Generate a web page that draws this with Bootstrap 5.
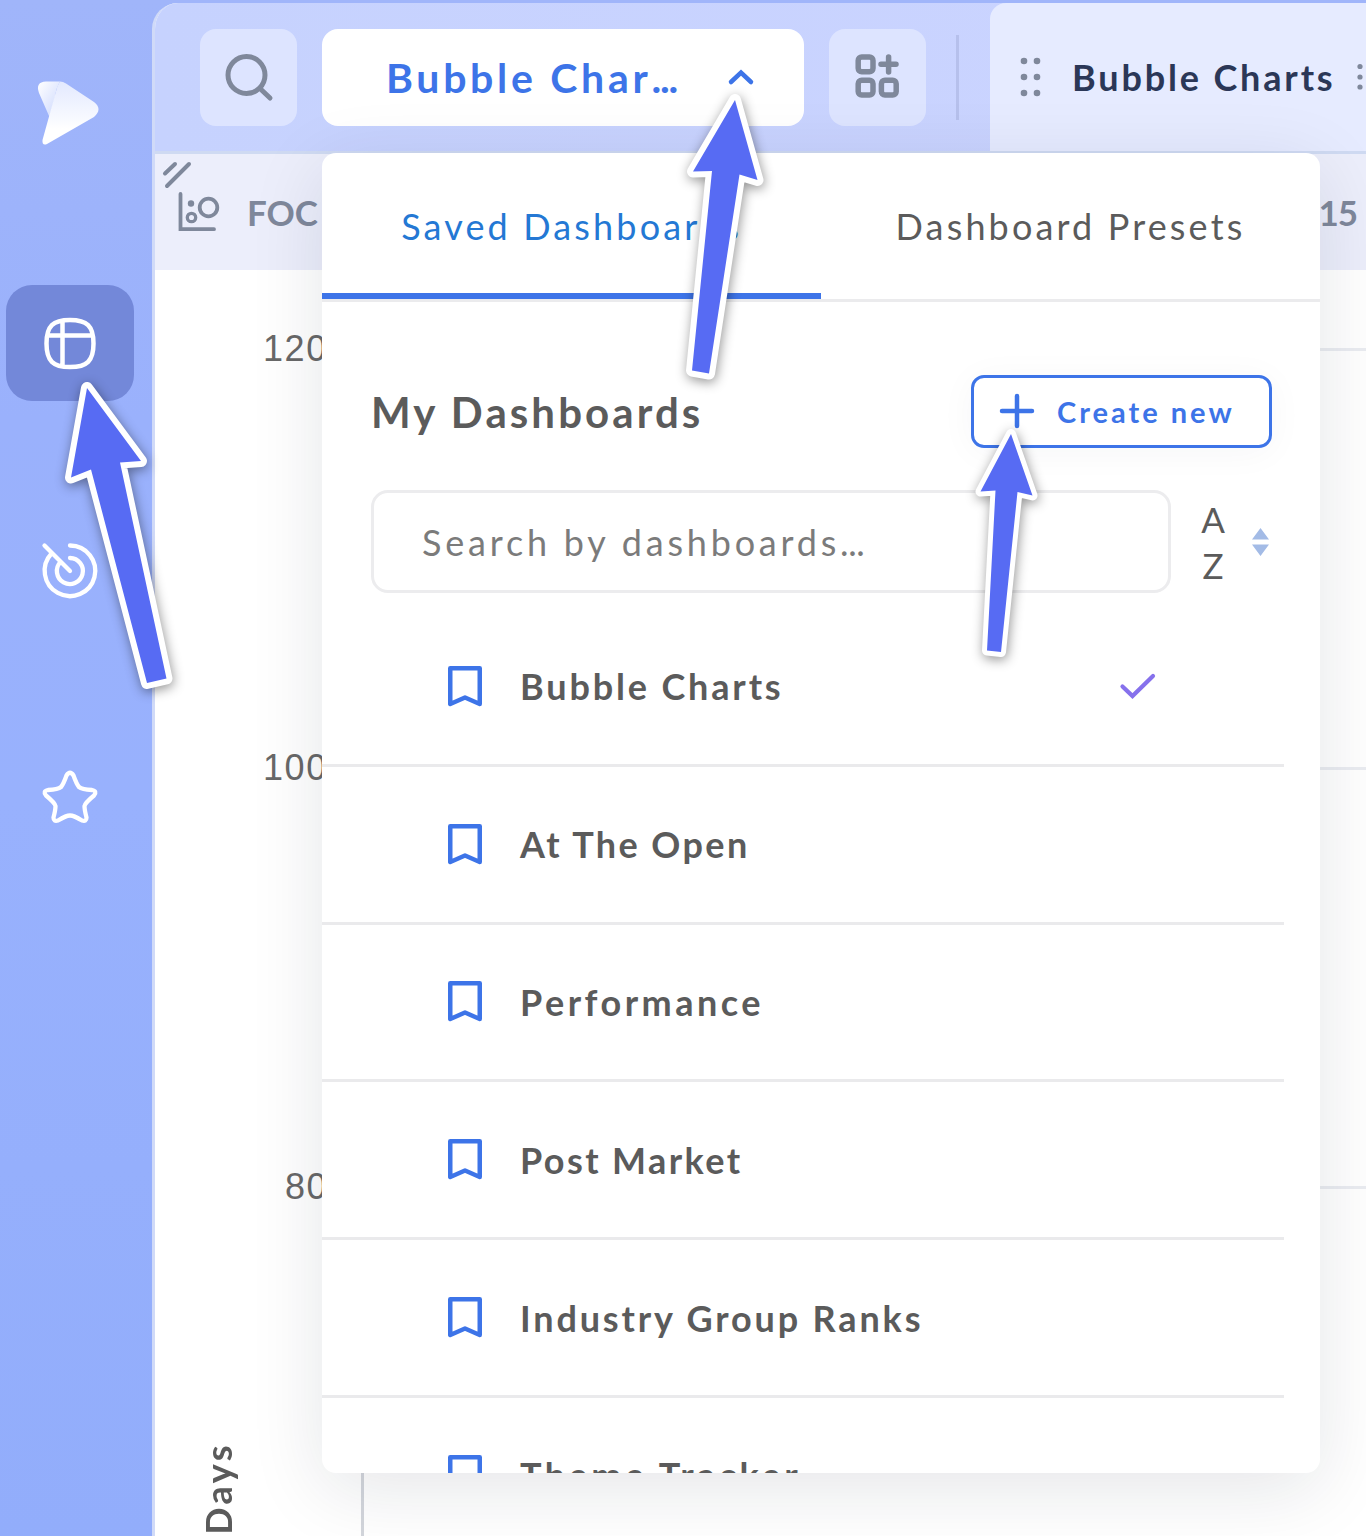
<!DOCTYPE html>
<html lang="en">
<head>
<meta charset="utf-8">
<meta name="viewport" content="width=device-width, initial-scale=1">
<title>Dashboards</title>
<link href="https://cdn.jsdelivr.net/npm/bootstrap@5.3.0/dist/css/bootstrap.min.css" rel="stylesheet">
<style>
body{font-family:Lato,"Noto Sans",sans-serif;font-size:36px;line-height:1;color:#5b5b5b;background:#fff}
svg{display:block;overflow:visible;flex:none}
.t{display:block;white-space:nowrap}
.app{width:1366px;height:1536px;overflow:hidden;background:linear-gradient(180deg,#a0b5fa 0,#9ab1fc 420px,#98b1fd 800px,#92adfb 100%)}
.side{width:152px;flex:none;padding-top:80px}
.side-item{width:128px;height:116px;margin-left:6px;border-radius:26px}
.side-item.current{background:#7388d9;margin-top:139px}
.side-item.next{margin-top:112px}
.main-area{flex:1;min-width:0;margin-top:3px;border-left:3px solid #d0daf8;border-top-left-radius:26px;overflow:hidden;background:#fff}
.toolbar{height:151px;background:linear-gradient(90deg,#c6d2fe,#cbd4ff);border-bottom:3px solid #cfdaf2;padding-left:45px}
.tool{width:97px;height:97px;border-radius:16px;background:#dde4ff;flex:none}
.picker{width:482px;height:97px;border-radius:16px;background:#fff;color:#3d74e8;padding:0 51px 0 64px;margin:0 25px;flex:none}
.rule{width:3px;height:85px;background:#b6c0ec;margin-left:30px;flex:none}
.tabcard{margin-left:31px;height:148px;flex:1;background:#e6ebff;border-top-left-radius:16px;color:#2b3757;padding-left:30px;position:relative}
.widget-bar{height:116px;background:#eceefb;color:#7f889b;padding:0 9px 0 23px}
.plot{position:relative;height:1266px}
.axis{position:absolute;font-family:"Liberation Sans",Arial,sans-serif;font-size:36px;letter-spacing:1.6px;color:#686868}
.gl{position:absolute;left:208px;right:0;height:3px;background:#eaecf1}
.vl{position:absolute;left:206px;top:0;bottom:0;width:3px;background:#d3d6dc}
.days{position:absolute;left:45px;top:1172px;writing-mode:vertical-rl;transform:rotate(180deg);font-weight:700;font-size:36px;letter-spacing:3.4px}
.panel{position:absolute;left:322px;top:153px;width:998px;height:1320px;border-radius:14px;box-shadow:0 16px 76px rgba(20,28,50,.11);background:#fff;overflow:hidden}
.tabs{height:149px;border-bottom:3px solid #ebebed}
.tabs>div{height:146px;position:relative}
.tabs .on{color:#2478d4}
.tabs .on::after{content:"";position:absolute;left:0;right:0;bottom:0;height:6px;background:#3d74e8}
.head{height:73px;margin:73px 48px 0 49px}
.create{width:301px;height:73px;border:3px solid #3d74e8;border-radius:13px;color:#3d74e8;padding:0 0 1px 26px;box-shadow:0 4px 36px rgba(30,40,80,.04)}
.find{height:103px;margin:42px 48px 0 49px}
.field{width:800px;height:103px;border:3px solid #ececee;border-radius:17px;padding-left:48px;color:#7b7b7b}
.az{margin-left:30px;width:24px;line-height:46px;font-size:35px}
.rows{margin:16px 36px 0 0}
.item{height:157.8px;border-bottom:3px solid #eaeaec;padding:0 128px 0 126px}
.item .t{margin-left:38px;font-weight:700}
.arrows{position:absolute;left:0;top:0;pointer-events:none;filter:drop-shadow(1px 3px 6px rgba(0,0,0,.42))}
.k1{font-size:41px;font-weight:700;letter-spacing:3.7px}
.k1 span{letter-spacing:-1.2px}
.k2{letter-spacing:2.4px}
.k25{letter-spacing:2.85px}
.k3{font-size:42px;font-weight:700;letter-spacing:3.1px}
.k31{letter-spacing:3.15px}
.k35{letter-spacing:3.5px}
.k4{font-size:29px;font-weight:700;letter-spacing:3px}
.ks{letter-spacing:3.8px}
.ks span{letter-spacing:-.4px}
</style>
</head>
<body>
<div class="app d-flex position-relative">
  <nav class="side">
    <svg width="152" height="66" viewBox="0 80 152 66">
      <defs>
        <linearGradient id="lg1" x1="0" y1="0" x2="0" y2="1"><stop offset="0" stop-color="#e3e9fe"/><stop offset=".6" stop-color="#f8faff"/><stop offset=".75" stop-color="#fff"/></linearGradient>
        <linearGradient id="lg2" x1="0" y1="0" x2="1" y2="1"><stop offset="0" stop-color="#fff"/><stop offset="1" stop-color="#cbd7fd"/></linearGradient>
      </defs>
      <path d="M46 81.500H60Q56 88 55 97L49.500 117L39 93Q35 82 46 81.500Z" fill="url(#lg2)"/>
      <path d="M60 81.500Q63 81.500 66 83.500L94 102Q103 109 94 117L47 144Q42 146 42.500 140L57.500 86Z" fill="url(#lg1)"/>
    </svg>
    <div class="side-item current">
      <svg width="128" height="116" viewBox="6 285 128 116" fill="none" stroke="#fff" stroke-width="4.500">
        <path d="M70 320C87 320 93.500 326 93.500 343.500S87 367 70 367S46.500 361 46.500 343.500S53 320 70 320ZM62.500 321V366M48 335.500H92"/>
      </svg>
    </div>
    <div class="side-item next">
      <svg width="128" height="116" viewBox="6 513 128 116" fill="none" stroke="#fff" stroke-width="4.300" stroke-linecap="round">
        <path d="M70 545.500A25.300 25.300 0 1 1 51.500 553.500M70 558A13 13 0 1 1 60.500 562M44.500 545.500L70 571"/>
      </svg>
    </div>
    <div class="side-item next">
      <svg width="128" height="116" viewBox="6 741 128 116" fill="none" stroke="#fff" stroke-width="4.300" stroke-linejoin="round">
        <path d="M66.500 775.500Q70 770 73.500 775.500Q76.500 784 79 787Q82 789.500 92 790Q97.500 791 94 795.500Q85 803 84.500 806Q84.500 810 86.500 817.500Q86.500 822 82 820.500Q74 815.500 70 815.500Q66 815.500 58 820.500Q53.500 822 53.500 817.500Q55.500 810 55.500 806Q55 803 46 795.500Q42.500 791 48 790Q58 789.500 61 787Q63.500 784 66.500 775.500Z"/>
      </svg>
    </div>
  </nav>

  <main class="main-area">
    <header class="toolbar d-flex align-items-center">
      <div class="tool"><svg width="97" height="97" viewBox="200 29 97 97" fill="none" stroke="#7f889b" stroke-width="5" stroke-linecap="round"><circle cx="246.500" cy="75" r="18.500"/><path d="M260 88.500L270 98"/></svg></div>
      <div class="picker d-flex align-items-center justify-content-between"><span class="t k1">Bubble Char<span>...</span></span>
        <svg width="24" height="14" viewBox="729 69.500 24 14" fill="none" stroke="#3d74e8" stroke-width="4.500" stroke-linecap="round"><path d="M731 81.500L741 72L751 81.500"/></svg></div>
      <div class="tool"><svg width="97" height="97" viewBox="829 29 97 97" fill="none" stroke="#7f889b" stroke-width="5.500"><rect x="858.200" y="57" width="14.800" height="14.800" rx="3.500"/><rect x="858.200" y="80.200" width="14.800" height="14.800" rx="3.500"/><rect x="881.400" y="80.200" width="14.800" height="14.800" rx="3.500"/><path d="M881 64.300H896M888.600 57V72" stroke-linecap="round"/></svg></div>
      <div class="rule"></div>
      <div class="tabcard d-flex align-items-center">
        <svg width="20" height="38" viewBox="1020 58.500 20 38" fill="#7f889b"><circle cx="1024" cy="61.500" r="3.300"/><circle cx="1037" cy="61.500" r="3.300"/><circle cx="1024" cy="77.500" r="3.300"/><circle cx="1037" cy="77.500" r="3.300"/><circle cx="1024" cy="93.500" r="3.300"/><circle cx="1037" cy="93.500" r="3.300"/></svg>
        <span class="t fw-bold k25" style="margin-left:32px">Bubble Charts</span>
        <svg class="position-absolute end-0" width="10" height="28" viewBox="1356 63.500 10 28" fill="#7f889b"><circle cx="1360" cy="67" r="2.600"/><circle cx="1360" cy="77.500" r="2.600"/><circle cx="1360" cy="87.500" r="2.600"/></svg>
      </div>
    </header>
    <section class="widget-bar d-flex align-items-center position-relative">
      <svg width="41" height="38" viewBox="178 193 41 38" fill="none" stroke="#7f889b" stroke-width="3.800"><path d="M180.500 194V229.200H214" stroke-linecap="round"/><circle cx="208.500" cy="207.500" r="8.800"/><circle cx="191.500" cy="217.500" r="4.200" stroke-width="3.300"/><circle cx="191" cy="203.500" r="3.200" fill="#7f889b" stroke="none"/></svg>
      <svg class="position-absolute top-0 start-0" width="40" height="36" viewBox="155 154 40 36" stroke="#7f889b" stroke-width="4" stroke-linecap="round"><path d="M165 173.500L175 164M167 186L189 164"/></svg>
      <span class="t fw-bold" style="margin-left:28px;font-size:35px">FOC</span>
      <span class="t fw-bold ms-auto" style="font-size:35px;letter-spacing:-1px">15</span>
    </section>
    <section class="plot">
      <div class="gl" style="top:78px"></div><div class="gl" style="top:497px"></div><div class="gl" style="top:916px"></div>
      <div class="vl"></div>
      <span class="axis" style="left:108px;top:61px">120</span>
      <span class="axis" style="left:108px;top:480px">100</span>
      <span class="axis" style="left:130px;top:899px">80</span>
      <span class="days">Days</span>
    </section>
  </main>

  <div class="panel">
    <div class="tabs d-flex text-center">
      <div class="on w-50 d-flex align-items-center justify-content-center"><span class="t k31">Saved Dashboards</span></div>
      <div class="w-50 d-flex align-items-center justify-content-center"><span class="t k31">Dashboard Presets</span></div>
    </div>
    <div class="head d-flex align-items-center justify-content-between">
      <span class="t k3">My Dashboards</span>
      <div class="create d-flex align-items-center">
        <svg width="34" height="34" viewBox="0 0 34 34" stroke="#3d74e8" stroke-width="4.500" stroke-linecap="round"><path d="M2 17H32M17 2V32"/></svg>
        <span class="t k4" style="margin-left:23px">Create new</span>
      </div>
    </div>
    <div class="find d-flex align-items-center">
      <div class="field d-flex align-items-center"><span class="t ks">Search by dashboards<span>...</span></span></div>
      <div class="az text-center">A<br>Z</div>
      <svg style="margin-left:27px" width="17" height="28" viewBox="0 0 17 28" fill="#a3bbe6"><path d="M8.500 0L17 11.500H0ZM8.500 28L17 16.500H0Z"/></svg>
    </div>
    <div class="rows">
      <div class="item d-flex align-items-center"><svg width="34" height="41" viewBox="0 0 34 41" fill="none" stroke="#3d74e8" stroke-width="4.500" stroke-linejoin="round"><path d="M2.250 2.250H31.750V38L17 31.500L2.250 38Z"/></svg><span class="t k25">Bubble Charts</span>
        <svg class="ms-auto" width="36" height="25" viewBox="1120 674 36 25" fill="none" stroke="#8671ec" stroke-width="4.200" stroke-linecap="round"><path d="M1122.500 686.500L1132.500 696L1153 676"/></svg></div>
      <div class="item d-flex align-items-center"><svg width="34" height="41" viewBox="0 0 34 41" fill="none" stroke="#3d74e8" stroke-width="4.500" stroke-linejoin="round"><path d="M2.250 2.250H31.750V38L17 31.500L2.250 38Z"/></svg><span class="t k2">At The Open</span></div>
      <div class="item d-flex align-items-center"><svg width="34" height="41" viewBox="0 0 34 41" fill="none" stroke="#3d74e8" stroke-width="4.500" stroke-linejoin="round"><path d="M2.250 2.250H31.750V38L17 31.500L2.250 38Z"/></svg><span class="t k35">Performance</span></div>
      <div class="item d-flex align-items-center"><svg width="34" height="41" viewBox="0 0 34 41" fill="none" stroke="#3d74e8" stroke-width="4.500" stroke-linejoin="round"><path d="M2.250 2.250H31.750V38L17 31.500L2.250 38Z"/></svg><span class="t k2">Post Market</span></div>
      <div class="item d-flex align-items-center"><svg width="34" height="41" viewBox="0 0 34 41" fill="none" stroke="#3d74e8" stroke-width="4.500" stroke-linejoin="round"><path d="M2.250 2.250H31.750V38L17 31.500L2.250 38Z"/></svg><span class="t k25">Industry Group Ranks</span></div>
      <div class="item d-flex align-items-center"><svg width="34" height="41" viewBox="0 0 34 41" fill="none" stroke="#3d74e8" stroke-width="4.500" stroke-linejoin="round"><path d="M2.250 2.250H31.750V38L17 31.500L2.250 38Z"/></svg><span class="t k35">Theme Tracker</span></div>
    </div>
  </div>

  <svg class="arrows" width="1366" height="1536" viewBox="0 0 1366 1536" fill="#576bf3" stroke="#fff" stroke-width="12" stroke-linejoin="round" paint-order="stroke">
    <path d="M735 100L693 171.500L712 171L692 370.500L709 373.500L739.500 174.500L757.500 180Z"/>
    <path d="M87 388L71 477.500L91 469.500L147 683L166.500 678.500L120 462.500L141 461Z"/>
    <path stroke-width="10" d="M1011 434L980.500 491.500L995.500 490.500L987 650.500L1001 652L1017.500 492L1032.500 495.500Z"/>
  </svg>
</div>
<script src="https://cdn.jsdelivr.net/npm/bootstrap@5.3.0/dist/js/bootstrap.bundle.min.js"></script>
</body>
</html>
